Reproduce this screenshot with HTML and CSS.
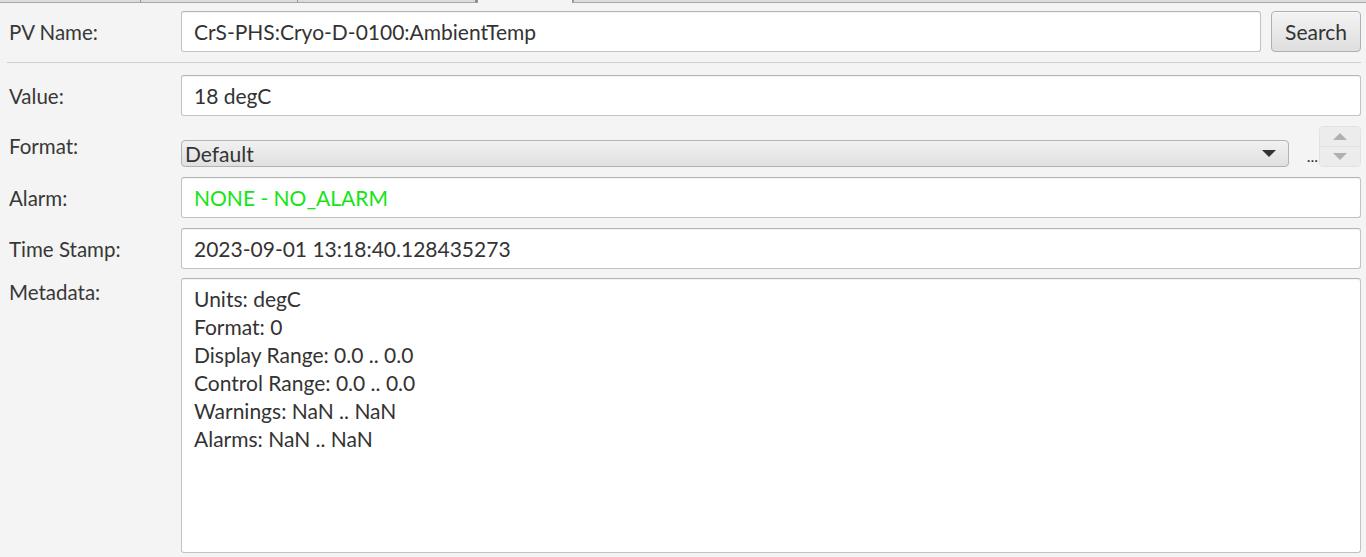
FILE: index.html
```html
<!DOCTYPE html>
<html>
<head>
<meta charset="utf-8">
<link rel="stylesheet" href="styles.css">
</head>
<body>
<div class="tabstrip">
  <div class="tab t1"></div><div class="tab t2"></div><div class="tab t3"></div><div class="tab t4"></div>
  <div class="tab-sel"></div>
  <div class="tab t5"></div>
</div>
<div class="page">
  <div class="row pv-row">
    <div class="label">PV Name:</div>
    <div class="field">CrS-PHS:Cryo-D-0100:AmbientTemp</div>
    <button class="btn">Search</button>
  </div>
  <div class="sep"></div>
  <div class="form">
    <div class="label">Value:</div>
    <div class="field">18 degC</div>

    <div class="label label-format">Format:</div>
    <div class="format-row">
      <div class="combo"><span>Default</span><span class="arrow"></span></div>
      <span class="dots">...</span>
      <div class="spinner">
        <div class="spin up"><span class="tri-up"></span></div>
        <div class="spin down"><span class="tri-down"></span></div>
      </div>
    </div>

    <div class="label">Alarm:</div>
    <div class="field alarm">NONE - NO_ALARM</div>

    <div class="label">Time Stamp:</div>
    <div class="field">2023-09-01 13:18:40.128435273</div>

    <div class="label label-top">Metadata:</div>
    <div class="field meta">
      <div>Units: degC</div>
      <div>Format: 0</div>
      <div>Display Range: 0.0 .. 0.0</div>
      <div>Control Range: 0.0 .. 0.0</div>
      <div>Warnings: NaN .. NaN</div>
      <div>Alarms: NaN .. NaN</div>
    </div>
  </div>
</div>
</body>
</html>
```
FILE: styles.css
```css
* { box-sizing: border-box; }
html, body {
  margin: 0;
  padding: 0;
  background: #f4f4f4;
  width: 1366px;
  height: 557px;
  overflow: hidden;
  font-family: Lato, "Open Sans", sans-serif;
  font-size: 21px;
  color: #333;
}
.tabstrip {
  display: flex;
  height: 3px;
}
.tab {
  height: 3px;
  background: #dcdcdc;
  border-bottom: 1px solid #a8a8a8;
  border-left: 1px solid #9a9a9a;
}
.t1 { width: 140px; border-left: none; }
.t2 { width: 157px; }
.t3 { width: 180px; border-right: 2px solid #8a8a8a; }
.tab-sel { width: 94px; }
.t5 { flex: 1; border-left: 2px solid #9a9a9a; }
.page {
  padding: 8px 5px 0 9px;
}
.row {
  display: flex;
  align-items: center;
}
.label {
  width: 172px;
  flex: none;
  color: #383838;
  font-size: 20.5px;
  display: flex;
  align-items: center;
}
.field {
  background: #fff;
  border: 1px solid #c2c2c2;
  border-top-color: #b4b4b4;
  border-radius: 3px;
  box-shadow: inset 0 1px 1px rgba(0,0,0,0.05);
  height: 41px;
  padding: 0 12px;
  display: flex;
  align-items: center;
  color: #333;
  white-space: nowrap;
}
.pv-row .field {
  flex: 1;
  margin-right: 10px;
}
.btn {
  width: 90px;
  height: 41px;
  font: inherit;
  color: #333;
  border: 1px solid #b0b0b0;
  border-radius: 4px;
  background: linear-gradient(#f3f3f3, #dedede);
  box-shadow: inset 0 1px 0 #fafafa;
  padding: 0;
}
.sep {
  height: 1px;
  background: #cfcfcf;
  margin: 10px 0 12px -2px;
}
.form {
  display: grid;
  grid-template-columns: 172px 1fr;
  row-gap: 10px;
}
.label-format {
  align-items: flex-start;
  padding-top: 8px;
}
.label-top {
  align-items: flex-start;
  padding-top: 1px;
}
.format-row {
  display: flex;
  align-items: flex-end;
  height: 41px;
}
.combo {
  flex: 1;
  height: 27px;
  border: 1px solid #b2b2b2;
  border-radius: 4px;
  background: linear-gradient(#f1f1f1, #e0e0e0);
  display: flex;
  align-items: center;
  justify-content: space-between;
  padding: 0 12px 0 3px;
  color: #333;
}
.arrow {
  width: 0;
  height: 0;
  border-left: 7px solid transparent;
  border-right: 7px solid transparent;
  border-top: 7px solid #333;
}
.dots {
  width: 30px;
  padding-right: 1px;
  text-align: right;
  font-size: 16px;
  color: #333;
  padding-bottom: 4px;
  line-height: 14px;
}
.spinner {
  width: 42px;
  height: 41px;
  display: flex;
  flex-direction: column;
  border: 1px solid #e2e2e2;
  border-radius: 4px;
  overflow: hidden;
}
.spin {
  flex: 1;
  background: #ececec;
  display: flex;
  align-items: center;
  justify-content: center;
}
.spin.up { border-bottom: 1px solid #e0e0e0; }
.tri-up, .tri-down {
  width: 0;
  height: 0;
  border-left: 7px solid transparent;
  border-right: 7px solid transparent;
}
.tri-up { border-bottom: 7px solid #b0b0b0; }
.tri-down { border-top: 7px solid #b0b0b0; }
.alarm {
  color: #12e612;
}
.meta {
  height: 275px;
  flex-direction: column;
  align-items: flex-start;
  justify-content: flex-start;
  padding-top: 6px;
  line-height: 28px;
  margin-top: -1px;
}
```
